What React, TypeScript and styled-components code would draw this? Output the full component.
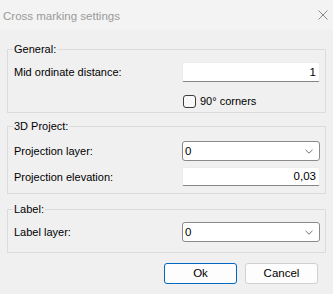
import React from "react";
import styled, { createGlobalStyle } from "styled-components";

const GlobalStyle = createGlobalStyle`
  html, body { margin: 0; padding: 0; background: #f0f0f0; }
  body { font-family: "Liberation Sans", Arial, sans-serif; font-size: 11px; color: #000; }
  * { box-sizing: border-box; }
`;

const Window = styled.div`
  width: 333px;
  height: 294px;
  background: #f0f0f0;
  display: flex;
  flex-direction: column;
  overflow: hidden;
`;

const TitleBar = styled.div`
  height: 30px;
  flex: 0 0 30px;
  background: #f3f3f3;
  display: flex;
  align-items: center;
  justify-content: space-between;
  padding: 0 5px 0 3px;
`;

const Title = styled.span`
  font-size: 11.5px;
  color: #9a9a9a;
  margin-top: 1px;
`;

const CloseBtn = styled.div`
  width: 10px;
  height: 10px;
  display: flex;
`;

const Body = styled.div`
  padding: 12px 7px 0 7px;
  display: flex;
  flex-direction: column;
`;

const Group = styled.fieldset<{ $mt?: number; $pt?: number; $pb?: number }>`
  margin: ${(p) => p.$mt ?? 0}px 0 0 0;
  padding: ${(p) => p.$pt ?? 4}px 5px ${(p) => p.$pb ?? 5}px 6px;
  border: 1px solid #dcdcdc;
  min-width: 0;
  display: flex;
  flex-direction: column;
`;

const Legend = styled.legend`
  margin-left: -1px;
  padding: 0 1px;
  line-height: 14px;
  font-size: 11px;
`;

const Row = styled.div<{ $mt?: number; $h?: number }>`
  display: grid;
  grid-template-columns: 1fr 138px;
  align-items: center;
  height: ${(p) => p.$h ?? 20}px;
  margin-top: ${(p) => p.$mt ?? 0}px;
`;

const Label = styled.span`
  font-size: 11px;
  line-height: 14px;
`;

const TextInput = styled.div<{ $h?: number }>`
  height: ${(p) => p.$h ?? 20}px;
  background: #fff;
  border: 1px solid #ececec;
  border-bottom: 1px solid #868686;
  border-radius: 2px;
  text-align: right;
  padding: 0 3px 0 0;
  line-height: ${(p) => (p.$h ?? 20) - 2}px;
  font-size: 11.5px;
`;

const Select = styled.div`
  height: 20px;
  background: #fff;
  border: 1px solid #8a8a8a;
  border-radius: 3px;
  display: flex;
  align-items: center;
  justify-content: space-between;
  padding: 0 6px 0 2px;
  font-size: 11.5px;
`;

const CheckWrap = styled.label`
  grid-column: 2;
  display: flex;
  align-items: center;
  gap: 4px;
  margin-left: 1px;
`;

const CheckBox = styled.span`
  width: 13px;
  height: 13px;
  border: 1px solid #3c3c3c;
  border-radius: 3px;
  background: #f8f8f8;
  display: inline-block;
`;

const Buttons = styled.div`
  display: flex;
  justify-content: flex-end;
  gap: 8px;
  padding: 10px 8px 0 0;
`;

const Button = styled.button<{ $primary?: boolean }>`
  width: 73px;
  height: 21px;
  font-family: "Liberation Sans", Arial, sans-serif;
  font-size: 11.5px;
  color: #000;
  background: #fdfdfd;
  border: 1px solid ${(p) => (p.$primary ? "#0067c0" : "#d0d0d0")};
  border-radius: 3px;
  padding: 0;
  line-height: 19px;
`;

const Chevron = () => (
  <svg width="8" height="5" viewBox="0 0 8 5">
    <path d="M0.5 0.8 L4 4.2 L7.5 0.8" fill="none" stroke="#707070" strokeWidth="1" />
  </svg>
);

export default function App() {
  return (
    <>
      <GlobalStyle />
      <Window>
        <TitleBar>
          <Title>Cross marking settings</Title>
          <CloseBtn>
            <svg width="10" height="10" viewBox="0 0 10 10">
              <path d="M0.5 0.5 L9.5 9.5 M9.5 0.5 L0.5 9.5" stroke="#8a8a8a" strokeWidth="1" />
            </svg>
          </CloseBtn>
        </TitleBar>
        <Body>
          <Group $pt={6} $pb={5}>
            <Legend>General:</Legend>
            <Row>
              <Label>Mid ordinate distance:</Label>
              <TextInput>1</TextInput>
            </Row>
            <Row $mt={12} $h={13}>
              <CheckWrap>
                <CheckBox />
                <Label>90° corners</Label>
              </CheckWrap>
            </Row>
          </Group>
          <Group $mt={6} $pt={8} $pb={7}>
            <Legend>3D Project:</Legend>
            <Row>
              <Label>Projection layer:</Label>
              <Select>
                <span>0</span>
                <Chevron />
              </Select>
            </Row>
            <Row $mt={6} $h={19}>
              <Label>Projection elevation:</Label>
              <TextInput $h={19}>0,03</TextInput>
            </Row>
          </Group>
          <Group $mt={8} $pt={6} $pb={10}>
            <Legend>Label:</Legend>
            <Row>
              <Label>Label layer:</Label>
              <Select>
                <span>0</span>
                <Chevron />
              </Select>
            </Row>
          </Group>
          <Buttons>
            <Button $primary>Ok</Button>
            <Button>Cancel</Button>
          </Buttons>
        </Body>
      </Window>
    </>
  );
}
